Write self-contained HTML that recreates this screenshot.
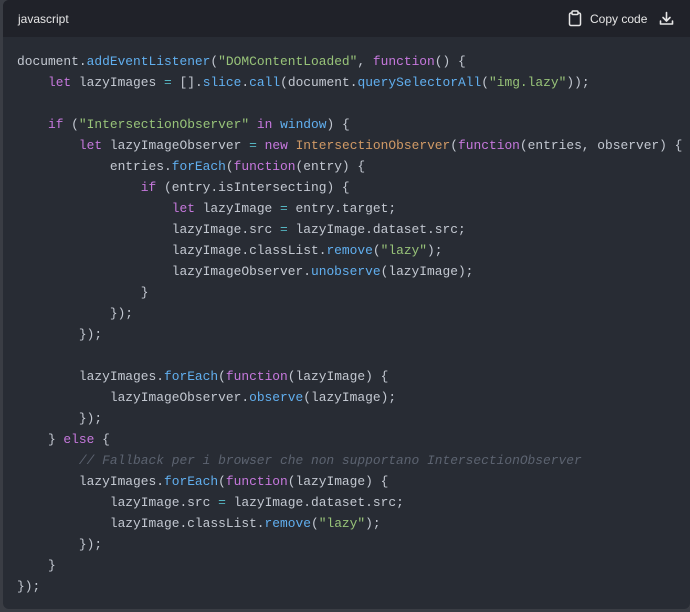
<!DOCTYPE html>
<html><head><meta charset="utf-8"><style>
html,body{margin:0;padding:0;width:690px;height:612px;overflow:hidden;background:#3a3d44;}
.box{position:absolute;left:3px;top:0;width:687px;height:609px;border-radius:6px 0 6px 6px;overflow:hidden;background:#282c34;}
.hdr{height:37px;background:#202229;position:relative;font-family:"Liberation Sans",sans-serif;font-size:12px;color:#e6e6e6;}
.hdr .lang{position:absolute;left:15px;top:12px;}
.hdr .copy{position:absolute;left:587px;top:12px;}
pre{margin:0;position:absolute;left:14px;top:51px;font-family:"Liberation Mono",monospace;font-size:12.9px;line-height:21px;color:#c3c8d1;}
.k{color:#c678dd}.f{color:#61afef}.s{color:#98c379}.c{color:#5c6370;font-style:italic}.o{color:#56b6c2}.t{color:#d19a66}
</style></head><body>
<div class="box">
<div class="hdr"><span class="lang">javascript</span>
<svg style="position:absolute;left:565px;top:10px" width="14" height="17" viewBox="0 0 14 17" fill="none" stroke="#e6e6e6" stroke-width="1.5"><rect x="1.5" y="3" width="11" height="12.5" rx="1.5"/><rect x="4" y="1" width="6" height="3.5" rx="1" fill="#202229"/></svg>
<span class="copy">Copy code</span>
<svg style="position:absolute;left:656px;top:11px" width="15" height="15" viewBox="0 0 15 15" fill="none" stroke="#e6e6e6" stroke-width="1.6" stroke-linecap="round" stroke-linejoin="round"><path d="M7.5 1.5v8M4 6.5l3.5 3.5 3.5-3.5M1.5 10v3h12v-3"/></svg>
</div>
<pre>document.<span class="f">addEventListener</span>(<span class="s">"DOMContentLoaded"</span>, <span class="k">function</span>() {
    <span class="k">let</span> lazyImages <span class="o">=</span> [].<span class="f">slice</span>.<span class="f">call</span>(document.<span class="f">querySelectorAll</span>(<span class="s">"img.lazy"</span>));

    <span class="k">if</span> (<span class="s">"IntersectionObserver"</span> <span class="k">in</span> <span class="f">window</span>) {
        <span class="k">let</span> lazyImageObserver <span class="o">=</span> <span class="k">new</span> <span class="t">IntersectionObserver</span>(<span class="k">function</span>(entries, observer) {
            entries.<span class="f">forEach</span>(<span class="k">function</span>(entry) {
                <span class="k">if</span> (entry.isIntersecting) {
                    <span class="k">let</span> lazyImage <span class="o">=</span> entry.target;
                    lazyImage.src <span class="o">=</span> lazyImage.dataset.src;
                    lazyImage.classList.<span class="f">remove</span>(<span class="s">"lazy"</span>);
                    lazyImageObserver.<span class="f">unobserve</span>(lazyImage);
                }
            });
        });

        lazyImages.<span class="f">forEach</span>(<span class="k">function</span>(lazyImage) {
            lazyImageObserver.<span class="f">observe</span>(lazyImage);
        });
    } <span class="k">else</span> {
        <span class="c">// Fallback per i browser che non supportano IntersectionObserver</span>
        lazyImages.<span class="f">forEach</span>(<span class="k">function</span>(lazyImage) {
            lazyImage.src <span class="o">=</span> lazyImage.dataset.src;
            lazyImage.classList.<span class="f">remove</span>(<span class="s">"lazy"</span>);
        });
    }
});</pre>
</div>
</body></html>
